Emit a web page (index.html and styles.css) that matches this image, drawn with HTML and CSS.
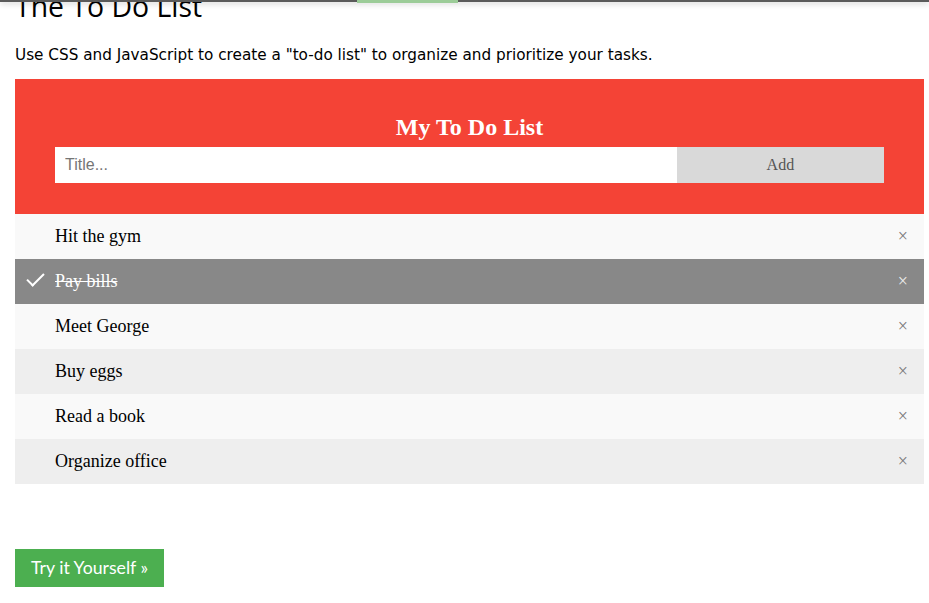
FILE: index.html
```html
<!DOCTYPE html>
<html lang="en">
<head>
<meta charset="utf-8">
<title>The To Do List</title>
<link rel="stylesheet" href="styles.css">
</head>
<body>
<div class="topbar"><span class="topbar-active"></span></div>
<main class="page">
  <h1 class="title">The To Do List</h1>
  <p class="intro">Use CSS and JavaScript to create a "to-do list" to organize and prioritize your tasks.</p>

  <section class="todo">
    <div class="header">
      <h2 class="header-title">My To Do List</h2>
      <div class="add-row">
        <input class="add-input" type="text" placeholder="Title...">
        <span class="add-btn">Add</span>
      </div>
    </div>
    <ul class="list">
      <li class="item">Hit the gym<span class="close">×</span></li>
      <li class="item checked">Pay bills<span class="close">×</span></li>
      <li class="item">Meet George<span class="close">×</span></li>
      <li class="item">Buy eggs<span class="close">×</span></li>
      <li class="item">Read a book<span class="close">×</span></li>
      <li class="item">Organize office<span class="close">×</span></li>
    </ul>
  </section>

  <a class="try-btn" href="#">Try it Yourself »</a>
</main>
</body>
</html>
```

FILE: styles.css
```css
html, body {
  margin: 0;
  padding: 0;
  background: #fff;
}

body {
  font-family: "Liberation Serif", "Times New Roman", serif;
  color: #000;
  overflow: hidden;
}

.topbar {
  position: fixed;
  top: 0;
  left: 0;
  right: 0;
  height: 2px;
  background: #5a5a5a;
  box-shadow: 0 1px 6px rgba(0, 0, 0, 0.35);
  z-index: 10;
}

.topbar-active {
  position: absolute;
  left: 357px;
  top: 0;
  width: 101px;
  height: 3px;
  background: #9ccc98;
}

.page {
  padding: 0 5px 0 15px;
}

.title {
  font-family: "Open Sans", "Noto Sans", sans-serif;
  font-weight: 400;
  font-size: 28.4px;
  line-height: 38px;
  margin: -13px 0 0;
  color: #000;
}

.intro {
  font-family: "DejaVu Sans", Verdana, sans-serif;
  font-size: 15.25px;
  line-height: 18px;
  margin: 21px 0 15px;
  color: #000;
}

.todo {
  width: 909px;
}

.header {
  background: #f44336;
  padding: 30px 40px 31px;
  color: #fff;
  text-align: center;
}

.header-title {
  margin: 4px 5px 6px;
  font-size: 24px;
  line-height: 28px;
  font-weight: 700;
}

.add-row {
  display: flex;
}

.add-input {
  flex: 0 0 75%;
  box-sizing: border-box;
  margin: 0;
  border: none;
  border-radius: 0;
  padding: 10px;
  font-family: "Liberation Sans", Arial, sans-serif;
  font-size: 16px;
  line-height: 16px;
  height: 36px;
  background: #fff;
  outline: none;
}

.add-input::placeholder {
  color: #757575;
}

.add-btn {
  flex: 0 0 25%;
  box-sizing: border-box;
  padding: 10px;
  background: #d9d9d9;
  color: #555;
  text-align: center;
  font-size: 16px;
  line-height: 16px;
  height: 36px;
}

.list {
  margin: 0;
  padding: 0;
  list-style: none;
}

.item {
  position: relative;
  padding: 12px 8px 12px 40px;
  background: #eee;
  font-size: 18px;
  line-height: 21px;
}

.item:nth-child(odd) {
  background: #f9f9f9;
}

.item.checked {
  background: #888;
  color: #fff;
  text-decoration: line-through;
}

.item.checked::before {
  content: "";
  position: absolute;
  border-color: #fff;
  border-style: solid;
  border-width: 0 2px 2px 0;
  top: 10px;
  left: 16px;
  transform: rotate(45deg);
  height: 15px;
  width: 7px;
}

.close {
  position: absolute;
  right: 0;
  top: 0;
  padding: 12px 16px;
  font-size: 18px;
  line-height: 21px;
  color: #777;
  text-decoration: none;
}

.item.checked .close {
  color: #eee;
}

.try-btn {
  display: inline-block;
  margin-top: 65px;
  padding: 8px 16px;
  background: #4caf50;
  color: #fff;
  font-family: "Lato", "Open Sans", sans-serif;
  font-size: 17.7px;
  line-height: 22px;
  text-decoration: none;
}
```
